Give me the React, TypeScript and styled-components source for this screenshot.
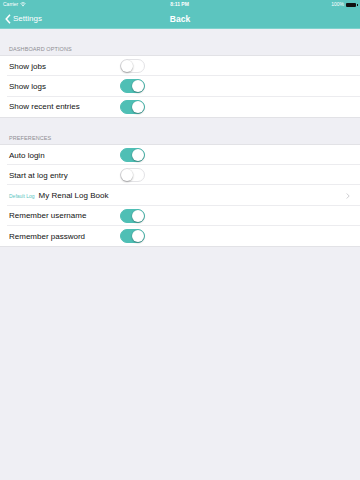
import React from "react";
import styled, { createGlobalStyle } from "styled-components";

const Global = createGlobalStyle`
  html, body { margin: 0; padding: 0; background: #efeff4; }
  body { font-family: "Liberation Sans", Arial, sans-serif; -webkit-font-smoothing: antialiased; }
  #root { width: 360px; height: 480px; background: #efeff4; }
`;

const Page = styled.div`
  width: 360px;
  height: 480px;
  display: flex;
  flex-direction: column;
  background: #efeff4;
`;

const Header = styled.div`
  background: #5cc5bf;
  height: 28px;
  display: flex;
  flex-direction: column;
  border-bottom: 1px solid #7fd2cd;
  color: #fff;
`;

const StatusBar = styled.div`
  height: 9px;
  display: grid;
  grid-template-columns: 1fr auto 1fr;
  align-items: center;
  padding: 0 4px 0 3px;
  font-size: 5px;
  line-height: 9px;
`;

const Carrier = styled.div`
  display: flex;
  align-items: center;
  gap: 2px;
`;

const Clock = styled.div`
  font-weight: bold;
  font-size: 5px;
`;

const Battery = styled.div`
  display: flex;
  align-items: center;
  justify-content: flex-end;
  gap: 2px;
`;

const BatteryBody = styled.span`
  display: inline-block;
  width: 10px;
  height: 4px;
  background: #111;
  border-radius: 1px;
  position: relative;
  &::after {
    content: "";
    position: absolute;
    right: -1.5px;
    top: 1px;
    width: 1px;
    height: 2px;
    background: #111;
  }
`;

const NavBar = styled.div`
  flex: 1;
  display: grid;
  grid-template-columns: 1fr auto 1fr;
  align-items: center;
  padding: 0 5px;
`;

const BackLink = styled.div`
  display: flex;
  align-items: center;
  gap: 2px;
  font-size: 8px;
  color: #fff;
`;

const Title = styled.div`
  font-size: 8.5px;
  font-weight: bold;
`;

const SectionHeader = styled.div`
  height: 26px;
  box-sizing: border-box;
  padding: 0 9px 3px;
  display: flex;
  align-items: flex-end;
  font-size: 5.5px;
  color: #8e8e93;
  letter-spacing: 0.1px;
  text-transform: uppercase;
`;

const Group = styled.div`
  background: #fff;
  border-top: 1px solid #e2e2e6;
  border-bottom: 1px solid #e2e2e6;
`;

const Row = styled.div<{ $last?: boolean }>`
  height: 20.3px;
  display: flex;
  align-items: center;
  padding-left: 9px;
  position: relative;
  font-size: 8px;
  color: #111;
  &::after {
    content: "";
    display: ${(p) => (p.$last ? "none" : "block")};
    position: absolute;
    left: 7px;
    right: 0;
    bottom: 0;
    height: 1px;
    background: #ececef;
  }
`;

const Label = styled.span`
  width: 111px;
`;

const Toggle = styled.span<{ $on: boolean }>`
  display: inline-block;
  width: 25px;
  height: 14px;
  box-sizing: border-box;
  border-radius: 7px;
  position: relative;
  background: ${(p) => (p.$on ? "#4fbfb5" : "#fff")};
  border: 1px solid ${(p) => (p.$on ? "#4fbfb5" : "#e3e3e6")};
  &::after {
    content: "";
    position: absolute;
    top: 0;
    left: ${(p) => (p.$on ? "11px" : "0")};
    width: 12px;
    height: 12px;
    border-radius: 50%;
    background: #fff;
    box-shadow: 0 1px 2px rgba(0, 0, 0, 0.3), 0 0 0 0.3px rgba(0, 0, 0, 0.1);
  }
`;

const SmallLabel = styled.span`
  font-size: 5px;
  color: #5cc5bf;
  margin-right: 4px;
`;

const Value = styled.span`
  flex: 1;
`;

const Chevron = styled.span`
  margin-right: 10px;
  display: flex;
  align-items: center;
`;

const Wifi = () => (
  <svg width="6" height="5" viewBox="0 0 12 9">
    <path d="M6 8.5 L8 6 A3.2 3.2 0 0 0 4 6 Z" fill="#fff" />
    <path d="M2.5 4.5 A5 5 0 0 1 9.5 4.5" stroke="#fff" strokeWidth="1.3" fill="none" />
    <path d="M0.8 2.7 A7.5 7.5 0 0 1 11.2 2.7" stroke="#fff" strokeWidth="1.3" fill="none" />
  </svg>
);

type Item = { label: string; on: boolean };

const dashboard: Item[] = [
  { label: "Show jobs", on: false },
  { label: "Show logs", on: true },
  { label: "Show recent entries", on: true },
];

export default function App() {
  return (
    <Page>
      <Global />
      <Header>
        <StatusBar>
          <Carrier>
            Carrier <Wifi />
          </Carrier>
          <Clock>8:11 PM</Clock>
          <Battery>
            100% <BatteryBody />
          </Battery>
        </StatusBar>
        <NavBar>
          <BackLink>
            <svg width="6" height="10" viewBox="0 0 6 10">
              <path d="M5 0.8 L1.2 5 L5 9.2" stroke="#fff" strokeWidth="1.5" fill="none" />
            </svg>
            Settings
          </BackLink>
          <Title>Back</Title>
          <div />
        </NavBar>
      </Header>

      <SectionHeader>Dashboard Options</SectionHeader>
      <Group>
        {dashboard.map((it, i) => (
          <Row key={it.label} $last={i === dashboard.length - 1}>
            <Label>{it.label}</Label>
            <Toggle $on={it.on} />
          </Row>
        ))}
      </Group>

      <SectionHeader>Preferences</SectionHeader>
      <Group>
        <Row>
          <Label>Auto login</Label>
          <Toggle $on />
        </Row>
        <Row>
          <Label>Start at log entry</Label>
          <Toggle $on={false} />
        </Row>
        <Row>
          <SmallLabel>Default Log</SmallLabel>
          <Value>My Renal Log Book</Value>
          <Chevron>
            <svg width="4" height="6" viewBox="0 0 4 6">
              <path d="M0.7 0.5 L3.2 3 L0.7 5.5" stroke="#c7c7cc" strokeWidth="0.9" fill="none" />
            </svg>
          </Chevron>
        </Row>
        <Row>
          <Label>Remember username</Label>
          <Toggle $on />
        </Row>
        <Row $last>
          <Label>Remember password</Label>
          <Toggle $on />
        </Row>
      </Group>
    </Page>
  );
}
